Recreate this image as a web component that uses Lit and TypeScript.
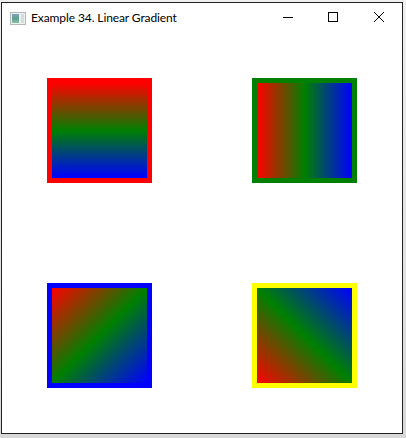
import { LitElement, html, css } from "lit";
import { customElement } from "lit/decorators.js";

@customElement("app-root")
export class AppRoot extends LitElement {
  static styles = css`
    :host {
      display: block;
      width: 406px;
      height: 438px;
      box-sizing: border-box;
      padding: 2px 3px 4px 1px;
      background: linear-gradient(#efefef, #d8d8d8);
    }
    .window {
      height: 100%;
      box-sizing: border-box;
      border: 1px solid #222;
      background: #fff;
      display: flex;
      flex-direction: column;
    }
    .titlebar {
      height: 30px;
      display: flex;
      align-items: center;
      padding-left: 8px;
      flex: none;
    }
    .icon {
      width: 16px;
      height: 16px;
      flex: none;
    }
    .title {
      margin-left: 5px;
      padding-bottom: 1px;
      font: 12px Lato, sans-serif;
      letter-spacing: -0.1px;
      color: #000;
      flex: 1;
      white-space: nowrap;
    }
    .controls {
      display: flex;
      align-self: flex-start;
    }
    .control {
      width: 46px;
      height: 28px;
      display: flex;
      align-items: center;
      justify-content: center;
    }
    .control svg {
      width: 12px;
      height: 12px;
    }
    .content {
      display: grid;
      grid-template-columns: 105px 105px;
      grid-template-rows: 105px 105px;
      column-gap: 100px;
      row-gap: 100px;
      padding: 45px 0 0 45px;
    }
    .box {
      box-sizing: border-box;
      border: 5px solid;
    }
    .vertical {
      border-color: #f00;
      background: linear-gradient(to bottom, #f00, #008000, #00f) padding-box;
    }
    .horizontal {
      border-color: #008000;
      background: linear-gradient(to right, #f00, #008000, #00f) padding-box;
    }
    .down {
      border-color: #00f;
      background: linear-gradient(135deg, #f00, #008000, #00f) padding-box;
    }
    .up {
      border-color: #ff0;
      background: linear-gradient(45deg, #f00, #008000, #00f) padding-box;
    }
  `;

  render() {
    return html`
      <div class="window">
        <div class="titlebar">
          <svg class="icon" viewBox="0 0 16 16">
            <defs>
              <linearGradient id="pane" x1="0" y1="0" x2="0" y2="1">
                <stop offset="0" stop-color="#7fa3c4" />
                <stop offset="0.5" stop-color="#5f9f8c" />
                <stop offset="1" stop-color="#8fc0a8" />
              </linearGradient>
            </defs>
            <rect x="0.5" y="2.5" width="15" height="12" fill="#eef0f0" stroke="#b4b8ba" />
            <rect x="2" y="4" width="7" height="9" fill="url(#pane)" />
            <rect x="11" y="4" width="3" height="9" fill="#d4dcdc" />
          </svg>
          <div class="title">Example 34. Linear Gradient</div>
          <div class="controls">
            <div class="control">
              <svg viewBox="0 0 12 12"><path d="M2 6.5H12" stroke="#000" fill="none" /></svg>
            </div>
            <div class="control">
              <svg viewBox="0 0 12 12"><rect x="1.5" y="1.5" width="9" height="9" stroke="#000" fill="none" /></svg>
            </div>
            <div class="control">
              <svg viewBox="0 0 12 12"><path d="M1 1L11 11M11 1L1 11" stroke="#000" fill="none" /></svg>
            </div>
          </div>
        </div>
        <div class="content">
          <div class="box vertical"></div>
          <div class="box horizontal"></div>
          <div class="box down"></div>
          <div class="box up"></div>
        </div>
      </div>
    `;
  }
}
